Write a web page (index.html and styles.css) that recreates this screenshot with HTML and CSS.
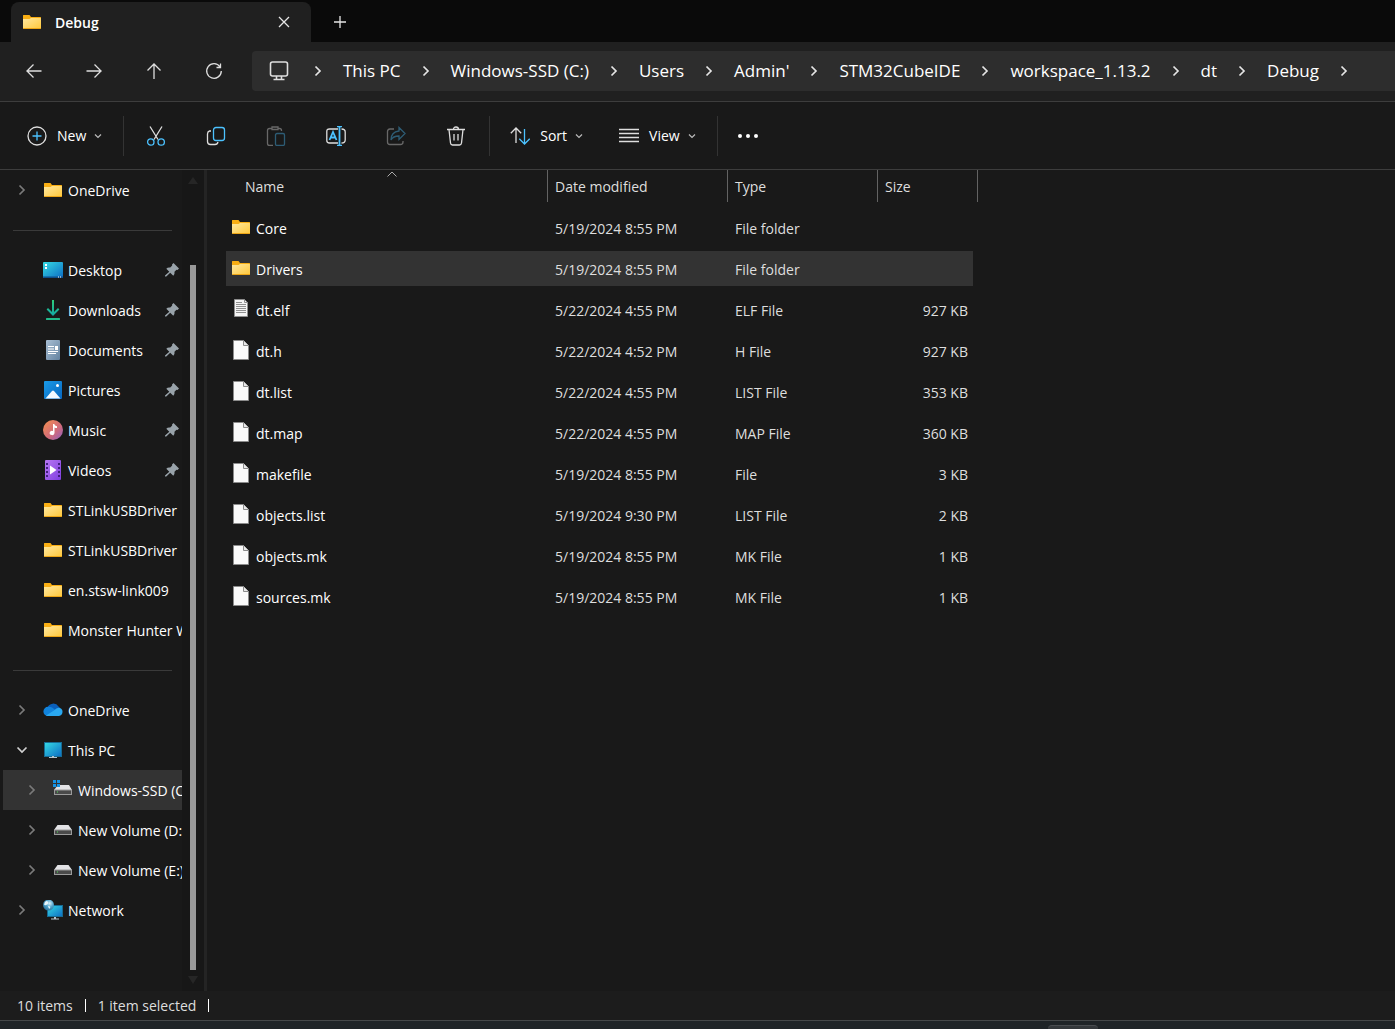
FILE: index.html
```
<!DOCTYPE html>
<html lang="en">
  <head>
    <meta charset="UTF-8" />
    <meta name="viewport" content="width=device-width, initial-scale=1.0" />
    <title>Debug</title>
    <link rel="stylesheet" href="styles.css">
  </head>
  <body>
    <!-- shared icons -->
    <svg class="defs" width="0" height="0" aria-hidden="true">
      <defs>
        <linearGradient id="gFolder" x1="0" y1="0" x2="1" y2="1">
          <stop offset="0" stop-color="#ffe8a0" />
          <stop offset="1" stop-color="#ffc83a" />
        </linearGradient>
        <linearGradient id="gScreen" x1="0" y1="0" x2="1" y2="1">
          <stop offset="0" stop-color="#36dbe4" />
          <stop offset="1" stop-color="#0c6cc4" />
        </linearGradient>
        <linearGradient id="gDown" x1="0" y1="0" x2="0" y2="1">
          <stop offset="0" stop-color="#2fce7c" />
          <stop offset="1" stop-color="#12a6a6" />
        </linearGradient>
        <linearGradient id="gDoc" x1="0" y1="0" x2="1" y2="1">
          <stop offset="0" stop-color="#a9bfd4" />
          <stop offset="1" stop-color="#63829f" />
        </linearGradient>
        <linearGradient id="gPic" x1="0" y1="0" x2="1" y2="1">
          <stop offset="0" stop-color="#1a9be8" />
          <stop offset="1" stop-color="#0766bf" />
        </linearGradient>
        <linearGradient id="gMusic" x1="0" y1="0" x2="1" y2="1">
          <stop offset="0.1" stop-color="#f08a55" />
          <stop offset="0.6" stop-color="#cf6a7c" />
          <stop offset="1" stop-color="#8e5fc4" />
        </linearGradient>
        <linearGradient id="gVideo" x1="0" y1="0" x2="1" y2="1">
          <stop offset="0" stop-color="#b877f2" />
          <stop offset="1" stop-color="#7f3fe0" />
        </linearGradient>
        <radialGradient id="gGlobe" cx="0.6" cy="0.35" r="0.7">
          <stop offset="0" stop-color="#d5eef8" />
          <stop offset="0.5" stop-color="#4fa3cc" />
          <stop offset="1" stop-color="#2c6f96" />
        </radialGradient>
      </defs>
      <symbol id="folder" viewBox="0 0 20 20">
        <path d="M1 3.5q0-.5.5-.5h6l1.500 2h9.500q.5 0 .5.5V8H1z" fill="#f9ae13" />
        <path d="M1 7h6.500l1.500-1h9.500q.5 0 .5.5V16q0 1-1 1H2q-1 0-1-1z" fill="url(#gFolder)" />
        <path d="M1 16h18q0 1-1 1H2q-1 0-1-1z" fill="#eda515" />
      </symbol>
      <symbol id="desktop" viewBox="0 0 20 20">
        <rect y="2" width="20" height="16" rx="1" fill="url(#gScreen)" />
        <path d="M2 4h2v2H2zM2 7h2v2H2z" fill="#fff" />
        <path d="M0 16.500h20v.5q0 1-1 1H1q-1 0-1-1z" fill="#0d4f8c" />
        <path d="M15 16.500h1v1h-1zM17 16.500h1v1h-1z" fill="#fff" />
      </symbol>
      <symbol id="downloads" viewBox="0 0 20 20">
        <path d="M9 0h2v12l4-4 1.400 1.400L10 16 3.600 9.400 5 8l4 4z" fill="url(#gDown)" />
        <rect x="3" y="18" width="14" height="2" rx=".5" fill="#22b98a" />
      </symbol>
      <symbol id="documents" viewBox="0 0 20 20">
        <rect x="3" width="14" height="20" rx="1" fill="url(#gDoc)" />
        <path d="M5 6h6v1H5zM5 8.500h6v1H5zM5 11h10v1H5zM5 13h8v1H5zM12 6h3v4h-3z" fill="#fff" />
      </symbol>
      <symbol id="pictures" viewBox="0 0 20 20">
        <rect x="1" y="1" width="18" height="18" rx="1" fill="url(#gPic)" />
        <path d="M2.500 18.500L9 11q1-1 2 0l6.500 7.500z" fill="#f2f9ff" />
        <circle cx="14.500" cy="5.500" r="1.500" fill="#fff" />
      </symbol>
      <symbol id="music" viewBox="0 0 20 20">
        <circle cx="10" cy="10" r="10" fill="url(#gMusic)" />
        <path d="M10 4h1.200q.5 2 2.800 2.200V8q-1.600 0-2.500-.6V13a2.400 2.200 0 1 1-1.500-2.100z" fill="#fff" />
      </symbol>
      <symbol id="videos" viewBox="0 0 20 20">
        <rect x="2" width="16" height="20" rx="1" fill="url(#gVideo)" />
        <path d="M3 3h2v2H3zM3 7h2v2H3zM3 11h2v2H3zM3 15h2v2H3zM15 3h2v2h-2zM15 7h2v2h-2zM15 11h2v2h-2zM15 15h2v2h-2z" fill="#43207f" />
        <path d="M7 5.500L13.500 10 7 14.500z" fill="#fff" />
      </symbol>
      <symbol id="cloud" viewBox="0 0 20 20">
        <path d="M4.500 7.500a6 5.500 0 0 1 11-1 5 5 0 0 1 1.500 1.500L8 12.500z" fill="#0a5fbb" />
        <path d="M5 16a4.600 4.600 0 0 1 0-9.200q2.500-.3 4.500 1L14 11.500z" fill="#1183dc" />
        <path d="M3 15.500l8-5q3-3.500 6-2.500a4.200 4.200 0 0 1-1 8H5q-1.200 0-2-.5z" fill="#2aa8f0" />
      </symbol>
      <symbol id="pc" viewBox="0 0 20 20">
        <rect x="1.500" y="2.500" width="17" height="14" fill="url(#gScreen)" stroke="#176b93" />
        <path d="M9 16h2v1h3v1H6v-1h3z" fill="#b8c4cc" />
      </symbol>
      <symbol id="drive" viewBox="0 0 20 20">
        <path d="M4.500 5h11L19 10H1z" fill="#e3e3e6" />
        <path d="M1 9.500h18V15H1z" fill="#9b9b9b" />
        <path d="M2 10.500h16V14H2z" fill="#4a4a4a" />
        <path d="M4 11.500h1v1H4z" fill="#53e05b" />
      </symbol>
      <symbol id="windrive" viewBox="0 0 20 20">
        <path d="M5 5h11l3 5H1z" fill="#e3e3e6" />
        <path d="M1 9.500h18V15H1z" fill="#9b9b9b" />
        <path d="M2 10.500h16V14H2z" fill="#4a4a4a" />
        <path d="M4 11.500h1v1H4z" fill="#53e05b" />
        <path d="M0 0h3v3H0zM4 0h3v3H4zM0 4h3v3H0zM4 4h3v3H4z" fill="#1593e6" />
      </symbol>
      <symbol id="network" viewBox="0 0 20 20">
        <rect x="4.500" y="5.500" width="15" height="11" fill="url(#gScreen)" stroke="#176b93" />
        <path d="M11 17h2v1.500h3v1H8v-1h3z" fill="#b8c4cc" />
        <circle cx="5.500" cy="5" r="5.500" fill="url(#gGlobe)" />
        <path d="M2 2q2-2 3 0t-2 3-1-3zM5 6q3 0 2 2t-2-2z" fill="#e8f5fa" />
      </symbol>
      <symbol id="pin" viewBox="0 0 14 14">
        <path d="M8.500 0l5.500 5.500-1.500 1.500-1-.2-2 2q.5 2.400-1.200 3.900L5.200 9.700 1.300 13.600H0v-1L4.300 8.800 1.300 5.700Q2.800 4 5.200 4.500l2-2-.2-1z" fill="#98a2a9" />
      </symbol>
      <symbol id="page" viewBox="0 0 20 20">
        <path d="M2.500.5h10l5 5v14h-15z" fill="#fafafa" stroke="#8b8b8b" />
        <path d="M12.500.5v5h5" fill="#e8e8e8" stroke="#8b8b8b" />
      </symbol>
      <symbol id="textpage" viewBox="0 0 20 20">
        <path d="M3.500.5h10l3 3v14h-13z" fill="#f4f4f4" stroke="#8f8f8f" />
        <path d="M5 3.500h6M5 5.500h10M5 7.500h10M5 9.500h10M5 11.500h10M5 13.500h10" stroke="#909090" />
        <path d="M13.500 1v2.500h3" fill="none" stroke="#8f8f8f" />
      </symbol>
      <symbol id="next" viewBox="0 0 8 12">
        <path d="M1.500 1.500L6 6l-4.500 4.500" />
      </symbol>
      <symbol id="down" viewBox="0 0 8 8">
        <path d="M1 2.500l3 3 3-3" />
      </symbol>
    </svg>

    <header class="tabs">
      <div class="tab">
        <svg class="icon"><use href="#folder" /></svg>
        <span class="tab-title">Debug</span>
        <button class="tab-btn" aria-label="Close tab">
          <svg width="12" height="12" viewBox="0 0 12 12"><path d="M1 1l10 10M11 1L1 11" /></svg>
        </button>
      </div>
      <button class="tab-btn add" aria-label="New tab">
        <svg width="12" height="12" viewBox="0 0 12 12"><path d="M6 0v12M0 6h12" /></svg>
      </button>
    </header>

    <nav class="nav">
      <div class="nav-btns">
        <button aria-label="Back"><svg class="line" viewBox="0 0 20 20"><path d="M17.500 10H2.500M9.500 3.500L3 10l6.500 6.500" /></svg></button>
        <button aria-label="Forward"><svg class="line" viewBox="0 0 20 20"><path d="M2.500 10h15M10.500 3.500L17 10l-6.500 6.500" /></svg></button>
        <button aria-label="Up"><svg class="line" viewBox="0 0 20 20"><path d="M10 18V3M3.500 9.500L10 3l6.500 6.500" /></svg></button>
        <button aria-label="Refresh"><svg class="line" viewBox="0 0 20 20"><path d="M16 5.800A7.300 7.300 0 1 0 17.300 10M16.500 2.500V6.500H12.500" /></svg></button>
      </div>
      <div class="address">
        <svg class="line monitor" viewBox="0 0 20 20"><path d="M3.500 1h13q2 0 2 2v10q0 2-2 2h-13q-2 0-2-2V3q0-2 2-2zM7.500 15v3.500M12.500 15v3.500M4.500 18.500h11" /></svg>
        <svg class="next"><use href="#next" /></svg>
        <a href="#">This PC</a>
        <svg class="next"><use href="#next" /></svg>
        <a href="#">Windows-SSD (C:)</a>
        <svg class="next"><use href="#next" /></svg>
        <a href="#">Users</a>
        <svg class="next"><use href="#next" /></svg>
        <a href="#">Admin'</a>
        <svg class="next"><use href="#next" /></svg>
        <a href="#">STM32CubeIDE</a>
        <svg class="next"><use href="#next" /></svg>
        <a href="#">workspace_1.13.2</a>
        <svg class="next"><use href="#next" /></svg>
        <a href="#">dt</a>
        <svg class="next"><use href="#next" /></svg>
        <a href="#">Debug</a>
        <svg class="next"><use href="#next" /></svg>
      </div>
    </nav>

    <div class="toolbar">
      <button class="menu-btn">
        <svg class="line" viewBox="0 0 20 20"><circle cx="10" cy="10" r="9" /><path class="blue" d="M10 5.500v9M5.500 10h9" /></svg>
        New
        <svg class="down"><use href="#down" /></svg>
      </button>
      <span class="sep"></span>
      <div class="tools">
        <button aria-label="Cut"><svg class="line" viewBox="0 0 20 20"><path d="M4 .5l8 13M16 .5l-8 13" /><g class="blue"><circle cx="4.800" cy="16" r="3.200" /><circle cx="15.200" cy="16" r="3.200" /></g></svg></button>
        <button aria-label="Copy"><svg class="line" viewBox="0 0 20 20"><path d="M5 5H3.500Q1.500 5.500 1.500 8v7.500q0 3 3 3H9q2.500 0 3-2.500" /><rect class="blue" x="7.500" y="1.500" width="11" height="13" rx="2.500" /></svg></button>
        <button aria-label="Paste" disabled><svg class="line" viewBox="0 0 20 20"><path d="M6 2.500H3.500q-2 0-2 2v13q0 2 2 2H7M12 2.500h1.500q2 0 2 2V5M6 1h6v2.500H6z" /><rect class="blue" x="9.500" y="7.500" width="9" height="12" rx="1.500" /></svg></button>
        <button aria-label="Rename"><svg class="line" viewBox="0 0 20 20"><path d="M12 3H3.500Q.8 3 .8 5.500v9q0 2.500 2.700 2.500H12M15.500 3q3.700 0 3.700 3v8q0 3-3.700 3" /><path class="blue thick" d="M3.500 14L7 6l3.500 8M5 11.500h4M13.500.5v19" /><path class="blue" d="M11 .5h5M11 19.500h5" /></svg></button>
        <button aria-label="Share" disabled><svg class="line" viewBox="0 0 20 20"><path d="M8 3H4Q1.500 3 1.500 5.500V16q0 2.500 2.500 2.500h10.500q2.500 0 2.500-2.500v-1" /><path class="blue" d="M13 1.500l6 6-6 6V10q-6 0-8 4 0-8 8-9z" /></svg></button>
        <button aria-label="Delete"><svg class="line" viewBox="0 0 20 20"><path d="M1 3.500h18M3 3.500L4.500 17q.3 2 2 2h7q1.700 0 2-2L17 3.500M7.500 3.500q0-2.500 2.500-2.500t2.500 2.500M8 8v6.500M12 8v6.500" /></svg></button>
      </div>
      <span class="sep"></span>
      <button class="menu-btn">
        <svg class="line" viewBox="0 0 20 20"><path d="M6 17V2M.8 7.200L6 2l5.200 5.200" /><path class="blue" d="M14.500 3v15M9.300 12.800l5.200 5.200 5.200-5.200" /></svg>
        Sort
        <svg class="down"><use href="#down" /></svg>
      </button>
      <button class="menu-btn">
        <svg class="line" viewBox="0 0 20 20"><path d="M0 3.500h20M0 7.500h20M0 11.500h20M0 15.500h20" /></svg>
        View
        <svg class="down"><use href="#down" /></svg>
      </button>
      <span class="sep"></span>
      <button class="more" aria-label="See more"><svg width="20" height="20" viewBox="0 0 20 20" fill="#fff"><circle cx="2" cy="10" r="2" /><circle cx="10" cy="10" r="2" /><circle cx="18" cy="10" r="2" /></svg></button>
    </div>

    <main class="main">
      <aside class="sidebar">
        <ul class="tree">
          <li><svg class="next"><use href="#next" /></svg><svg class="icon"><use href="#folder" /></svg><a href="#">OneDrive</a></li>
          <li class="line-row"></li>
          <li><svg class="icon"><use href="#desktop" /></svg><a href="#">Desktop</a><svg class="pin"><use href="#pin" /></svg></li>
          <li><svg class="icon"><use href="#downloads" /></svg><a href="#">Downloads</a><svg class="pin"><use href="#pin" /></svg></li>
          <li><svg class="icon"><use href="#documents" /></svg><a href="#">Documents</a><svg class="pin"><use href="#pin" /></svg></li>
          <li><svg class="icon"><use href="#pictures" /></svg><a href="#">Pictures</a><svg class="pin"><use href="#pin" /></svg></li>
          <li><svg class="icon"><use href="#music" /></svg><a href="#">Music</a><svg class="pin"><use href="#pin" /></svg></li>
          <li><svg class="icon"><use href="#videos" /></svg><a href="#">Videos</a><svg class="pin"><use href="#pin" /></svg></li>
          <li><svg class="icon"><use href="#folder" /></svg><a href="#">STLinkUSBDriver</a></li>
          <li><svg class="icon"><use href="#folder" /></svg><a href="#">STLinkUSBDriver</a></li>
          <li><svg class="icon"><use href="#folder" /></svg><a href="#">en.stsw-link009</a></li>
          <li><svg class="icon"><use href="#folder" /></svg><a href="#">Monster Hunter World</a></li>
          <li class="line-row"></li>
          <li><svg class="next"><use href="#next" /></svg><svg class="icon"><use href="#cloud" /></svg><a href="#">OneDrive</a></li>
          <li><svg class="next open"><use href="#next" /></svg><svg class="icon"><use href="#pc" /></svg><a href="#">This PC</a></li>
          <li class="sub active"><svg class="next"><use href="#next" /></svg><svg class="icon"><use href="#windrive" /></svg><a href="#">Windows-SSD (C:)</a></li>
          <li class="sub"><svg class="next"><use href="#next" /></svg><svg class="icon"><use href="#drive" /></svg><a href="#">New Volume (D:)</a></li>
          <li class="sub"><svg class="next"><use href="#next" /></svg><svg class="icon"><use href="#drive" /></svg><a href="#">New Volume (E:)</a></li>
          <li><svg class="next"><use href="#next" /></svg><svg class="icon"><use href="#network" /></svg><a href="#">Network</a></li>
        </ul>
        <div class="scrollbar">
          <svg width="10" height="8" viewBox="0 0 10 8"><path d="M5 0l5 7H0z" /></svg>
          <div class="thumb"></div>
          <svg width="10" height="8" viewBox="0 0 10 8"><path d="M0 0h10L5 8z" /></svg>
        </div>
      </aside>

      <section class="files">
        <table>
          <colgroup>
            <col class="c-name" />
            <col class="c-date" />
            <col class="c-type" />
            <col class="c-size" />
          </colgroup>
          <thead>
            <tr>
              <th><button>Name<svg class="sort-mark" width="10" height="6" viewBox="0 0 10 6"><path d="M.5 5.500L5 1l4.500 4.500" /></svg></button></th>
              <th><button>Date modified</button></th>
              <th><button>Type</button></th>
              <th><button>Size</button></th>
            </tr>
          </thead>
          <tbody>
            <tr><td><div class="file"><svg class="icon"><use href="#folder" /></svg>Core</div></td><td>5/19/2024 8:55 PM</td><td>File folder</td><td></td></tr>
            <tr class="selected"><td><div class="file"><svg class="icon"><use href="#folder" /></svg>Drivers</div></td><td>5/19/2024 8:55 PM</td><td>File folder</td><td></td></tr>
            <tr><td><div class="file"><svg class="icon"><use href="#textpage" /></svg>dt.elf</div></td><td>5/22/2024 4:55 PM</td><td>ELF File</td><td>927 KB</td></tr>
            <tr><td><div class="file"><svg class="icon"><use href="#page" /></svg>dt.h</div></td><td>5/22/2024 4:52 PM</td><td>H File</td><td>927 KB</td></tr>
            <tr><td><div class="file"><svg class="icon"><use href="#page" /></svg>dt.list</div></td><td>5/22/2024 4:55 PM</td><td>LIST File</td><td>353 KB</td></tr>
            <tr><td><div class="file"><svg class="icon"><use href="#page" /></svg>dt.map</div></td><td>5/22/2024 4:55 PM</td><td>MAP File</td><td>360 KB</td></tr>
            <tr><td><div class="file"><svg class="icon"><use href="#page" /></svg>makefile</div></td><td>5/19/2024 8:55 PM</td><td>File</td><td>3 KB</td></tr>
            <tr><td><div class="file"><svg class="icon"><use href="#page" /></svg>objects.list</div></td><td>5/19/2024 9:30 PM</td><td>LIST File</td><td>2 KB</td></tr>
            <tr><td><div class="file"><svg class="icon"><use href="#page" /></svg>objects.mk</div></td><td>5/19/2024 8:55 PM</td><td>MK File</td><td>1 KB</td></tr>
            <tr><td><div class="file"><svg class="icon"><use href="#page" /></svg>sources.mk</div></td><td>5/19/2024 8:55 PM</td><td>MK File</td><td>1 KB</td></tr>
          </tbody>
        </table>
      </section>
    </main>

    <footer class="status">
      <span>10 items</span>
      <span>1 item selected</span>
    </footer>
    <div class="taskbar"><div class="taskbar-item"></div></div>
  </body>
</html>
```
FILE: styles.css
```
* {
  box-sizing: border-box;
}

body {
  margin: 0;
  height: 100vh;
  display: flex;
  flex-direction: column;
  overflow: hidden;
  background: #191919;
  color: #fff;
  font-family: "Open Sans", "Noto Sans", sans-serif;
  font-size: 14px;
  line-height: 20px;
}

button {
  border: 0;
  padding: 0;
  background: none;
  color: inherit;
  font: inherit;
}

a {
  color: inherit;
  text-decoration: none;
}

svg {
  display: block;
  flex: none;
}

.defs {
  position: absolute;
}

.icon {
  width: 20px;
  height: 20px;
}

.line {
  width: 20px;
  height: 20px;
  fill: none;
  stroke: #dedede;
  stroke-width: 1.3;
}

.line .blue {
  stroke: #4cc2ff;
}

.line .thick {
  stroke-width: 1.8;
}

.next {
  width: 8px;
  height: 12px;
  fill: none;
  stroke: #e6e6e6;
  stroke-width: 1.7;
}

.down {
  width: 8px;
  height: 8px;
  fill: none;
  stroke: #bbb;
  stroke-width: 1.2;
}

/* tabs */
.tabs {
  display: flex;
  flex: none;
  height: 42px;
  padding: 2px 0 0 11px;
  background: #0a0a0a;
}

.tab {
  display: flex;
  align-items: center;
  width: 300px;
  padding: 0 11px;
  border-radius: 8px 8px 0 0;
  background: #202020;
}

.tab-title {
  flex: 1;
  margin-left: 13px;
  padding-top: 2px;
  font-weight: 600;
}

.tab-btn {
  display: flex;
  align-items: center;
  justify-content: center;
  width: 32px;
}

.tab-btn path {
  stroke: #e6e6e6;
  stroke-width: 1.3;
}

.add {
  margin-left: 13px;
}

/* navigation */
.nav {
  display: flex;
  flex: none;
  align-items: center;
  height: 60px;
  padding: 0 0 2px 14px;
  border-bottom: 1px solid #3d3d3d;
  background: #202020;
}

.nav-btns,
.tools {
  display: flex;
  gap: 20px;
}

.nav-btns button,
.tools button {
  display: flex;
  align-items: center;
  justify-content: center;
  width: 40px;
  height: 40px;
}

.nav-btns {
  margin-right: 18px;
}

.tools button:disabled {
  opacity: 0.4;
}

.address {
  display: flex;
  flex: 1;
  align-items: center;
  gap: 21px;
  min-width: 0;
  height: 40px;
  padding-left: 17px;
  border-radius: 4px 0 0 4px;
  background: #2d2d2d;
  font-size: 17px;
  line-height: 24px;
  white-space: nowrap;
  overflow: hidden;
}

.monitor {
  margin-right: 4px;
  stroke-width: 1.6;
}

/* toolbar */
.toolbar {
  display: flex;
  flex: none;
  align-items: center;
  height: 68px;
  padding-left: 15px;
  border-bottom: 1px solid #3d3d3d;
}

.menu-btn {
  display: flex;
  align-items: center;
  gap: 10px;
  height: 40px;
  padding: 0 12px;
}

.menu-btn + .menu-btn {
  margin-left: 12px;
}

.menu-btn .down {
  margin-left: -2px;
}

.sep {
  width: 1px;
  height: 40px;
  margin: 0 8px 0 9px;
  background: #333;
}

.tools {
  margin: 0 4px;
}

.more {
  padding: 10px 12px;
}

/* content */
.main {
  display: flex;
  flex: 1;
  min-height: 0;
}

.sidebar {
  display: flex;
  flex: none;
  width: 207px;
  padding-left: 3px;
  border-right: 3px solid #242424;
  background: #191919;
}

.tree {
  flex: 1;
  min-width: 0;
  margin: 0;
  padding: 0;
  overflow: hidden;
  list-style: none;
}

.tree li {
  display: flex;
  align-items: center;
  height: 40px;
  padding-left: 40px;
  white-space: nowrap;
}

.tree a {
  flex: 1;
  margin-left: 5px;
  padding-top: 2px;
}

.tree .next {
  margin: 0 17px 0 -25px;
  stroke: #7a7a7a;
}

.tree .open {
  transform: rotate(90deg);
  stroke: #d0d0d0;
}

.tree .sub {
  padding-left: 50px;
}

.tree .active {
  background: #333;
}

.tree .line-row {
  padding: 0 10px;
}

.line-row::before {
  content: "";
  flex: 1;
  height: 1px;
  background: #3a3a3a;
}

.pin {
  width: 14px;
  height: 14px;
  margin-right: 3px;
}

.scrollbar {
  display: flex;
  flex-direction: column;
  align-items: center;
  width: 22px;
  padding: 7px 0;
  background: #171717;
}

.scrollbar path {
  fill: #262626;
}

.thumb {
  flex: 1;
  width: 6px;
  margin: 80px 0 6px;
  background: #999;
}

.files {
  flex: 1;
  min-width: 0;
  padding-left: 19px;
}

table {
  width: 752px;
  table-layout: fixed;
  border-spacing: 0;
}

.c-name {
  width: 322px;
}

.c-date {
  width: 180px;
}

.c-type {
  width: 150px;
}

.c-size {
  width: 100px;
}

th {
  padding: 0 0 5px;
  font-weight: normal;
}

th button {
  display: block;
  position: relative;
  width: 100%;
  height: 32px;
  padding: 2px 0 0 7px;
  border-right: 1px solid #636363;
  color: #dedede;
  text-align: left;
}

th:first-child button {
  padding-left: 19px;
}

.sort-mark {
  position: absolute;
  top: 1px;
  left: 50%;
  fill: none;
  stroke: #aaa;
}

td {
  height: 41px;
  padding: 2px 0 0 7px;
  border: solid transparent;
  border-width: 3px 0;
  background-clip: padding-box;
  color: #dedede;
}

td:first-child {
  padding-left: 5px;
  color: #fff;
}

td:last-child {
  padding-right: 5px;
  border-right-width: 5px;
  text-align: right;
}

.selected td {
  background-color: #333;
}

.file {
  display: flex;
  align-items: center;
  gap: 5px;
}

.file .icon {
  margin: -2px 0 2px;
}

/* status bar */
.status {
  display: flex;
  flex: none;
  align-items: center;
  height: 30px;
  padding-left: 17px;
  border-bottom: 1px solid #454849;
  background: #1c1c1c;
  color: #dedede;
}

.status span {
  display: flex;
  align-items: center;
}

.status span::after {
  content: "";
  width: 1px;
  height: 13px;
  margin: 0 12px;
  background: #fff;
}

.taskbar {
  flex: none;
  height: 8px;
  padding: 4px 297px 0 0;
  background: #1f2427;
}

.taskbar-item {
  width: 50px;
  height: 4px;
  margin-left: auto;
  border-top: 1px solid #4a4d50;
  border-radius: 4px 4px 0 0;
  background: #34383b;
}
```
